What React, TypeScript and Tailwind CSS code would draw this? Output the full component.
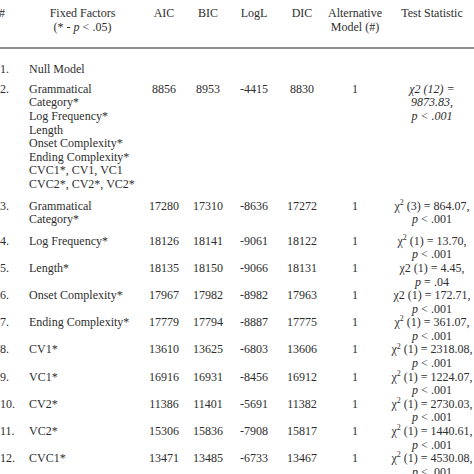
import React from "react";

type RowData = {
  n: string;
  factors: React.ReactNode[];
  aic?: string;
  bic?: string;
  logl?: string;
  dic?: string;
  alt?: string;
  stat?: React.ReactNode[];
  pb: string;
};

const Chi = () => (
  <span>
    χ<sup className="text-[8px] top-[-0.6em]">2</sup>
  </span>
);

const P = () => <span className="italic">p</span>;

const rows: RowData[] = [
  { n: "1.", factors: ["Null Model"], pb: "pb-[6px]" },
  {
    n: "2.",
    factors: [
      "Grammatical",
      "Category*",
      "Log Frequency*",
      "Length",
      "Onset Complexity*",
      "Ending Complexity*",
      "CVC1*, CV1, VC1",
      "CVC2*, CV2*, VC2*",
    ],
    aic: "8856",
    bic: "8953",
    logl: "-4415",
    dic: "8830",
    alt: "1",
    stat: [
      <span className="italic">χ2 (12) =</span>,
      <span className="italic">9873.83,</span>,
      <span className="italic">p &lt; .001</span>,
    ],
    pb: "pb-[8px]",
  },
  {
    n: "3.",
    factors: ["Grammatical", "Category*"],
    aic: "17280",
    bic: "17310",
    logl: "-8636",
    dic: "17272",
    alt: "1",
    stat: [
      <>
        <Chi /> (3) = 864.07,
      </>,
      <>
        <P /> &lt; .001
      </>,
    ],
    pb: "pb-[8px]",
  },
  {
    n: "4.",
    factors: ["Log Frequency*"],
    aic: "18126",
    bic: "18141",
    logl: "-9061",
    dic: "18122",
    alt: "1",
    stat: [
      <>
        <Chi /> (1) = 13.70,
      </>,
      <>
        <P /> &lt; .001
      </>,
    ],
    pb: "",
  },
  {
    n: "5.",
    factors: ["Length*"],
    aic: "18135",
    bic: "18150",
    logl: "-9066",
    dic: "18131",
    alt: "1",
    stat: [
      <>χ2 (1) = 4.45,</>,
      <>
        <P /> = .04
      </>,
    ],
    pb: "",
  },
  {
    n: "6.",
    factors: ["Onset Complexity*"],
    aic: "17967",
    bic: "17982",
    logl: "-8982",
    dic: "17963",
    alt: "1",
    stat: [
      <>χ2 (1) = 172.71,</>,
      <>
        <P /> &lt; .001
      </>,
    ],
    pb: "",
  },
  {
    n: "7.",
    factors: ["Ending Complexity*"],
    aic: "17779",
    bic: "17794",
    logl: "-8887",
    dic: "17775",
    alt: "1",
    stat: [
      <>
        <Chi /> (1) = 361.07,
      </>,
      <>
        <P /> &lt; .001
      </>,
    ],
    pb: "",
  },
  {
    n: "8.",
    factors: ["CV1*"],
    aic: "13610",
    bic: "13625",
    logl: "-6803",
    dic: "13606",
    alt: "1",
    stat: [
      <>
        <Chi /> (1) = 2318.08,
      </>,
      <>
        <P /> &lt; .001
      </>,
    ],
    pb: "",
  },
  {
    n: "9.",
    factors: ["VC1*"],
    aic: "16916",
    bic: "16931",
    logl: "-8456",
    dic: "16912",
    alt: "1",
    stat: [
      <>
        <Chi /> (1) = 1224.07,
      </>,
      <>
        <P /> &lt; .001
      </>,
    ],
    pb: "",
  },
  {
    n: "10.",
    factors: ["CV2*"],
    aic: "11386",
    bic: "11401",
    logl: "-5691",
    dic: "11382",
    alt: "1",
    stat: [
      <>
        <Chi /> (1) = 2730.03,
      </>,
      <>
        <P /> &lt; .001
      </>,
    ],
    pb: "",
  },
  {
    n: "11.",
    factors: ["VC2*"],
    aic: "15306",
    bic: "15836",
    logl: "-7908",
    dic: "15817",
    alt: "1",
    stat: [
      <>
        <Chi /> (1) = 1440.61,
      </>,
      <>
        <P /> &lt; .001
      </>,
    ],
    pb: "",
  },
  {
    n: "12.",
    factors: ["CVC1*"],
    aic: "13471",
    bic: "13485",
    logl: "-6733",
    dic: "13467",
    alt: "1",
    stat: [
      <>
        <Chi /> (1) = 4530.08,
      </>,
      <>
        <P /> &lt; .001
      </>,
    ],
    pb: "",
  },
];

const GRID =
  "grid grid-cols-[29px_107px_56px_32px_60px_36px_70px_84px] w-[474px]";

export default function App() {
  return (
    <div
      className="w-[474px] h-[474px] overflow-hidden bg-white text-[#2e2e2e] text-[12px] leading-[13.6px]"
      style={{ fontFamily: '"Liberation Serif", "Times New Roman", serif' }}
    >
      <div className={`${GRID} pt-[7px] pb-[13px] border-b-2 border-[#8f8f8f]`}>
        <div className="-ml-[1px]">#</div>
        <div className="flex flex-col items-center">
          <span>Fixed Factors</span>
          <span>
            (* - <span className="italic">p</span> &lt; .05)
          </span>
        </div>
        <div className="text-center">AIC</div>
        <div className="text-center">BIC</div>
        <div className="text-center">LogL</div>
        <div className="text-center">DIC</div>
        <div className="flex flex-col items-center">
          <span>Alternative</span>
          <span>Model (#)</span>
        </div>
        <div className="text-center whitespace-nowrap">Test Statistic</div>
      </div>
      <div className="pt-[14px]">
        {rows.map((r, i) => (
          <div key={i} className={`${GRID} ${r.pb}`}>
            <div>{r.n}</div>
            <div className="flex flex-col whitespace-nowrap">
              {r.factors.map((f, j) => (
                <span key={j}>{f}</span>
              ))}
            </div>
            <div className="text-center">{r.aic}</div>
            <div className="text-center">{r.bic}</div>
            <div className="text-center">{r.logl}</div>
            <div className="text-center">{r.dic}</div>
            <div className="text-center">{r.alt}</div>
            <div className="flex flex-col items-center whitespace-nowrap">
              {r.stat?.map((s, j) => (
                <span key={j}>{s}</span>
              ))}
            </div>
          </div>
        ))}
      </div>
    </div>
  );
}
